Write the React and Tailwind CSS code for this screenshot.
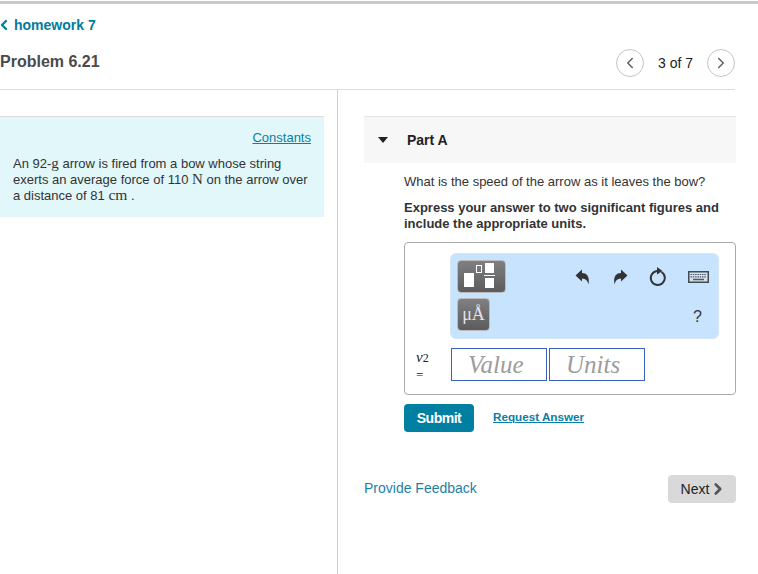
import { ChevronLeft, ChevronRight } from "lucide-react";

const serif = "font-['Liberation_Serif',serif]";

const UndoIcon = ({ flip }) => (
  <svg width="15" height="16" viewBox="0 0 15 16" className={flip ? "-scale-x-100" : ""}>
    <path d="M0.5 6.5 L7 0.5 V4 C11.5 4 15 7 13.5 15.5 C12.8 11.5 10.5 9.5 7 9.5 V12.5 Z" fill="#333" />
  </svg>
);

const ResetIcon = () => (
  <svg width="18" height="20" viewBox="0 0 18 20">
    <path d="M12.5 5 A7 7 0 1 1 8 4" fill="none" stroke="#333" strokeWidth="2" />
    <path d="M8 0 L13.5 4 L8 7.5 Z" fill="#333" />
  </svg>
);

const KeyboardIcon = () => (
  <svg width="21" height="12" viewBox="0 0 21 12">
    <rect x="0.75" y="0.75" width="19.5" height="10.5" fill="#d5e2ec" stroke="#3f4a52" strokeWidth="1.5" />
    <path d="M2.5 3.5 H18.5 M2.5 5.8 H18.5" stroke="#4d5a63" strokeWidth="1.2" strokeDasharray="1.5 0.8" />
    <path d="M5 8.5 H16" stroke="#4d5a63" strokeWidth="1.5" />
  </svg>
);

const TemplatesIcon = () => (
  <svg width="47" height="31" viewBox="1 1 47 31">
    <rect x="7" y="13" width="10" height="14" fill="#fff" />
    <rect x="19.5" y="5.5" width="5" height="7" fill="none" stroke="#fff" />
    <rect x="28" y="3" width="9" height="10" fill="#fff" />
    <rect x="27" y="15" width="11" height="1" fill="#fff" />
    <rect x="28" y="18" width="9" height="10" fill="#fff" />
  </svg>
);

const NavButton = ({ children }) => (
  <button className="flex h-[28px] w-[28px] items-center justify-center rounded-full border border-[#c4c4c4] text-[#55616b]">
    {children}
  </button>
);

const AnswerInput = ({ label }) => (
  <div className={`flex h-[33px] w-[96px] items-center border border-[#3b5fc9] pl-[16px] text-[25px] italic text-[#9c9c9c] ${serif}`}>
    {label}
  </div>
);

export default function App() {
  return (
    <div className="flex h-[574px] w-[758px] flex-col overflow-hidden bg-white font-['Liberation_Sans',sans-serif] text-[13px] text-[#333]">
      <div className="mt-px h-[3px] shrink-0 bg-[#c9c9c9]" />

      <div className="mr-[23px] h-[86px] shrink-0 border-b border-[#dcdcdc]">
        <a className="mt-[12px] flex h-[17px] items-center text-sm font-bold text-[#007c9e]">
          <ChevronLeft size={16} strokeWidth={3.5} className="-ml-[4px]" />
          <span className="ml-[2px]">homework 7</span>
        </a>
        <div className="mt-[14px] flex items-center justify-between">
          <h1 className="text-base font-bold text-[#4a4a4a]">Problem 6.21</h1>
          <div className="mt-[2px] flex items-center">
            <NavButton><ChevronLeft size={18} strokeWidth={2} /></NavButton>
            <span className="mx-[14px] text-sm text-[#222]">3 of 7</span>
            <NavButton><ChevronRight size={18} strokeWidth={2} /></NavButton>
          </div>
        </div>
      </div>

      <div className="flex min-h-0 flex-1">
        <aside className="w-[338px] shrink-0 border-r border-[#cfcfcf] pt-[26px]">
          <div className="h-[101px] w-[324px] border-t border-[#dcdcdc] bg-[#e1f7fa] pl-[13px] pr-[13px] pt-[11px]">
            <div className="text-right">
              <a className="text-[13px] leading-4 text-[#0a7ea4] underline">Constants</a>
            </div>
            <p className="mt-[8px] text-[13px] leading-4 text-[#333]">
              An 92-<span className={`${serif} text-[15px] leading-[0]`}>g</span> arrow is fired from a bow whose string exerts an average force of 110 <span className={`${serif} text-[15px] leading-[0]`}>N</span> on the arrow over a distance of 81 <span className={`${serif} text-[15.5px] leading-[0]`}>cm</span> .
            </p>
          </div>
        </aside>

        <main className="flex-1 pl-[26px] pr-[22px] pt-[26px]">
          <div className="flex h-[47px] items-center border-t border-[#e4e4e4] bg-[#f7f7f7]">
            <span className="ml-[14px] h-0 w-0 border-x-[5px] border-t-[6px] border-x-transparent border-t-[#222]" />
            <h2 className="ml-[19px] text-sm font-bold text-[#222]">Part A</h2>
          </div>

          <div className="pl-[40px]">
            <p className="mt-[11px] text-[13px] leading-4 text-[#333]">What is the speed of the arrow as it leaves the bow?</p>
            <p className="mt-[10px] text-[13px] font-bold leading-4 text-[#333]">
              Express your answer to two significant figures and<br />include the appropriate units.
            </p>

            <div className="mt-[10px] h-[153px] rounded border border-[#aaaaaa] pl-[10px] pt-[10px]">
              <div className="ml-[35px] flex h-[86px] w-[269px] rounded-md border border-[#d5e6f5] bg-[#c8e3fd] pl-[6px] pt-[6px]">
                <div className="flex flex-col gap-[5px]">
                  <button className="flex h-[33px] w-[49px] items-center justify-center rounded border border-[#bbb] bg-gradient-to-b from-[#807f82] to-[#5c5b5d]">
                    <TemplatesIcon />
                  </button>
                  <button className={`flex h-[33px] w-[33px] items-center justify-center rounded border border-[#bbb] bg-gradient-to-b from-[#807f82] to-[#5c5b5d] text-[18px] text-[#e4e4e4] ${serif}`}>
                    μÅ
                  </button>
                </div>
                <div className="ml-[69px] flex-1">
                  <div className="flex h-[33px] items-center">
                    <UndoIcon />
                    <span className="ml-[23px]"><UndoIcon flip /></span>
                    <span className="ml-[21px]"><ResetIcon /></span>
                    <span className="ml-[21px]"><KeyboardIcon /></span>
                  </div>
                  <div className="mt-[7px] flex h-[33px] items-center justify-end pr-[16px] text-base text-[#333]">?</div>
                </div>
              </div>

              <div className="mt-[9px] flex">
                <div className={`w-[36px] pl-px leading-4 text-[#222] ${serif}`}>
                  <div className="pt-px text-[15px]"><i>v</i><span className="text-[12px]">2</span></div>
                  <div className="pt-px text-[13px]">=</div>
                </div>
                <div className="flex gap-[2px]">
                  <AnswerInput label="Value" />
                  <AnswerInput label="Units" />
                </div>
              </div>
            </div>

            <div className="mt-[9px] flex items-center">
              <button className="h-[28px] w-[70px] rounded-sm bg-[#007fa3] text-sm font-bold tracking-[-0.5px] text-white">Submit</button>
              <a className="ml-[19px] pb-[2px] text-[11.7px] font-bold text-[#0a7ea4] underline">Request Answer</a>
            </div>
          </div>

          <div className="mt-[43px] flex items-center justify-between">
            <a className="pb-[2px] text-sm text-[#1f7fa6]">Provide Feedback</a>
            <button className="flex h-[28px] w-[68px] items-center justify-center rounded-sm bg-[#d9d9d9] pl-[4px] text-sm text-[#222]">
              Next
              <ChevronRight size={18} strokeWidth={3.5} className="text-[#555]" />
            </button>
          </div>
        </main>
      </div>
    </div>
  );
}
